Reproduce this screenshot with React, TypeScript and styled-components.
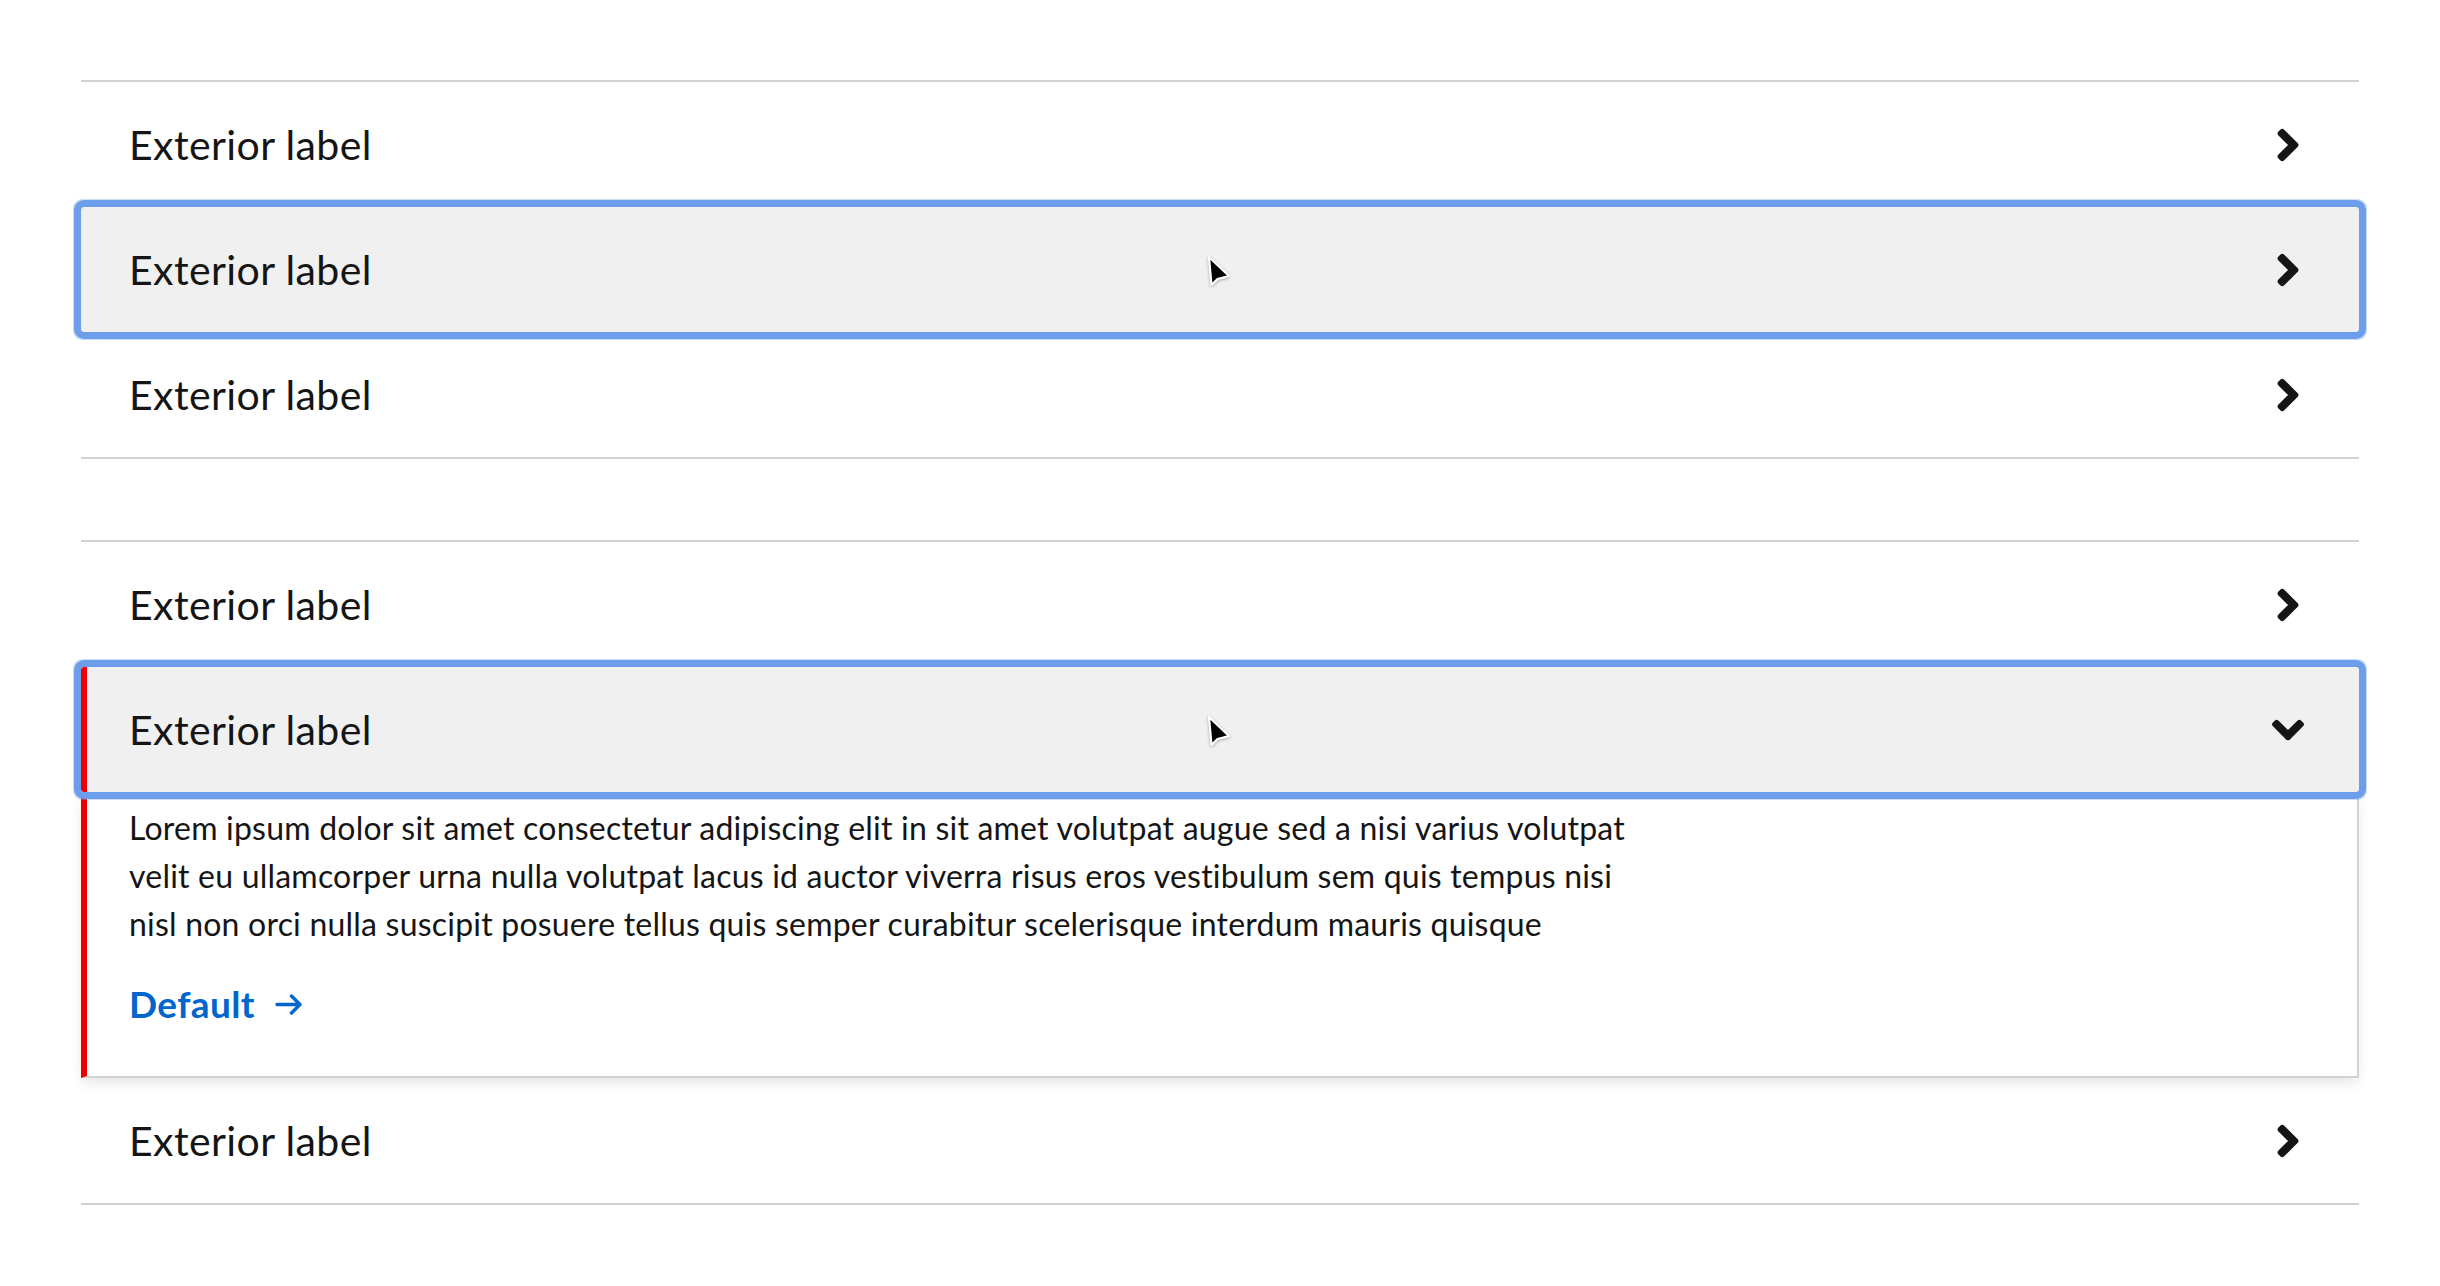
import styled, { createGlobalStyle } from 'styled-components';

const GlobalStyle = createGlobalStyle`
  * {
    box-sizing: border-box;
  }

  body {
    margin: 0;
    background: #ffffff;
    color: #151515;
    font-family: 'Lato', 'Open Sans', sans-serif;
  }
`;

type Item = {
  label: string;
  focused?: boolean;
  expanded?: boolean;
};

const firstGroup: Item[] = [
  { label: 'Exterior label' },
  { label: 'Exterior label', focused: true },
  { label: 'Exterior label' },
];

const secondGroup: Item[] = [
  { label: 'Exterior label' },
  { label: 'Exterior label', focused: true, expanded: true },
  { label: 'Exterior label' },
];

const PANEL_TEXT =
  'Lorem ipsum dolor sit amet consectetur adipiscing elit in sit amet volutpat augue sed a nisi varius volutpat velit eu ullamcorper urna nulla volutpat lacus id auctor viverra risus eros vestibulum sem quis tempus nisi nisl non orci nulla suscipit posuere tellus quis semper curabitur scelerisque interdum mauris quisque';

const AngleRight = () => (
  <svg width="26" height="52" viewBox="0 0 256 512" fill="currentColor">
    <path d="M224.3 273l-136 136c-9.4 9.4-24.6 9.4-33.9 0l-22.6-22.6c-9.4-9.4-9.4-24.6 0-33.9l96.4-96.4-96.4-96.4c-9.4-9.4-9.4-24.6 0-33.9L54.3 103c9.4-9.4 24.6-9.4 33.9 0l136 136c9.5 9.4 9.5 24.6.1 34z" />
  </svg>
);

const AngleDown = () => (
  <svg width="32" height="52" viewBox="0 0 320 512" fill="currentColor">
    <path d="M143 352.3L7 216.3c-9.4-9.4-9.4-24.6 0-33.9l22.6-22.6c9.4-9.4 24.6-9.4 33.9 0l96.4 96.4 96.4-96.4c9.4-9.4 24.6-9.4 33.9 0l22.6 22.6c9.4 9.4 9.4 24.6 0 33.9l-136 136c-9.4 9.5-24.6 9.5-34 .1z" />
  </svg>
);

const ArrowRight = () => (
  <svg width="28" height="21" viewBox="0 0 28 21" fill="none" stroke="currentColor" strokeWidth="3.4" strokeLinecap="round" strokeLinejoin="round">
    <path d="M2 10.5h23M16.5 2l8.5 8.5-8.5 8.5" />
  </svg>
);

const Pointer = ({ $shift }: { $shift?: boolean }) => (
  <CursorMark $shift={$shift} width="30" height="36" viewBox="0 0 30 36">
    <path d="M4 3 L6.5 31 L12.5 25 L24 22 Z" fill="#000" stroke="#fff" strokeWidth="2.2" strokeLinejoin="round" />
  </CursorMark>
);

const AccordionGroup = ({ items }: { items: Item[] }) => (
  <Accordion>
    {items.map((item, i) => (
      <Section key={i}>
        <Header type="button" $focused={item.focused} $expanded={item.expanded}>
          <Label>{item.label}</Label>
          <IconBox>{item.expanded ? <AngleDown /> : <AngleRight />}</IconBox>
          {item.focused && <Pointer $shift={item.expanded} />}
        </Header>
        {item.expanded && (
          <Panel>
            <Body>{PANEL_TEXT}</Body>
            <Cta href="#">
              Default
              <ArrowRight />
            </Cta>
          </Panel>
        )}
      </Section>
    ))}
  </Accordion>
);

const App = () => (
  <>
    <GlobalStyle />
    <Page>
      <AccordionGroup items={firstGroup} />
      <AccordionGroup items={secondGroup} />
    </Page>
  </>
);

const Page = styled.main`
  display: flex;
  flex-direction: column;
  gap: 81px;
  padding: 80px 81px;
`;

const Accordion = styled.div`
  display: flex;
  flex-direction: column;
  border-top: 2px solid #d2d2d2;
  border-bottom: 2px solid #d2d2d2;
`;

const Section = styled.div`
  display: flex;
  flex-direction: column;
`;

const Header = styled.button<{ $focused?: boolean; $expanded?: boolean }>`
  position: relative;
  z-index: ${({ $focused }) => ($focused ? 2 : 0)};
  display: flex;
  align-items: center;
  justify-content: space-between;
  width: 100%;
  height: 125px;
  margin: 0;
  padding: 0 55px 0 ${({ $expanded }) => ($expanded ? '42px' : '48px')};
  border: none;
  border-left: ${({ $expanded }) => ($expanded ? '6px solid #ee0000' : 'none')};
  border-radius: ${({ $focused }) => ($focused ? '3px' : '0')};
  background: ${({ $focused }) => ($focused ? '#f0f0f0' : 'transparent')};
  outline: ${({ $focused }) => ($focused ? '7px solid #6c9eec' : 'none')};
  box-shadow: ${({ $focused }) => ($focused ? '0 0 0 8px rgba(108, 158, 236, 0.35)' : 'none')};
  color: #151515;
  font-family: inherit;
  text-align: left;
  cursor: pointer;
`;

const Label = styled.span`
  font-size: 41px;
  font-weight: 400;
  letter-spacing: 0.4px;
  line-height: 1.3;
`;

const IconBox = styled.span`
  display: flex;
  align-items: center;
  justify-content: center;
  width: 32px;
  color: #151515;
`;

const CursorMark = styled.svg<{ $shift?: boolean }>`
  position: absolute;
  left: ${({ $shift }) => ($shift ? '1118px' : '1124px')};
  top: 47px;
  filter: drop-shadow(0 1px 1.5px rgba(0, 0, 0, 0.3));
`;

const Panel = styled.div`
  position: relative;
  z-index: 1;
  display: flex;
  flex-direction: column;
  align-items: flex-start;
  padding: 12px 48px 45px 42px;
  background: #ffffff;
  border-left: 6px solid #ee0000;
  border-right: 2px solid #d2d2d2;
  border-bottom: 2px solid #d2d2d2;
  box-shadow: 0 6px 12px -2px rgba(21, 21, 21, 0.12);
`;

const Body = styled.p`
  max-width: 1516px;
  margin: 0;
  font-size: 32px;
  letter-spacing: 0.21px;
  line-height: 48px;
  color: #151515;
`;

const Cta = styled.a`
  display: inline-flex;
  align-items: center;
  gap: 20px;
  margin-top: 29px;
  font-size: 37px;
  font-weight: 700;
  letter-spacing: 0.4px;
  line-height: 54px;
  color: #0066cc;
  text-decoration: none;
`;

export default App;
